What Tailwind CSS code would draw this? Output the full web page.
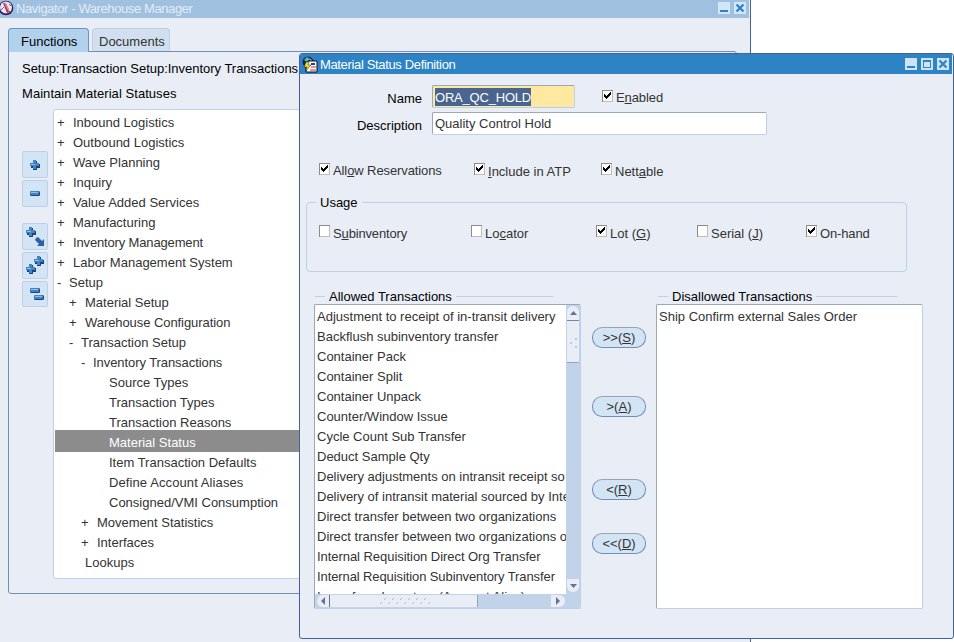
<!DOCTYPE html>
<html lang="en">
<head>
    <meta charset="UTF-8">
    <meta name="viewport" content="width=device-width, initial-scale=1.0">
    <title>Material Status Definition</title>
    <script src="https://cdn.jsdelivr.net/npm/@tailwindcss/browser@4"></script>
</head>
<body class="relative w-[954px] h-[642px] overflow-hidden bg-white font-['Liberation_Sans',sans-serif] text-[13px] leading-5 text-[#333] whitespace-nowrap">

<!-- shared icons -->
<svg class="hidden">
    <symbol id="plus" viewBox="0 0 10 10">
        <path d="M4 1h3v3h3v4H7v2H3V8H1V4h3z" fill="#1c4478"/>
        <path d="M3 0h3v3h3v3H6v3H3V6H0V3h3z" fill="#4584c4"/>
        <path d="M4 1h1v3H1v1h4V1z" fill="#8fc0ec"/>
    </symbol>
    <symbol id="dash" viewBox="0 0 10 5">
        <rect y="0" width="10" height="5" rx="1.5" fill="#1c4478"/>
        <rect width="9" height="4" rx="1.5" fill="#4584c4"/>
        <path d="M1 1h7v1H1z" fill="#8fc0ec"/>
    </symbol>
    <symbol id="win-min" viewBox="0 0 12 12"><path d="M2 8h8v2H2z" fill="#2d83c3"/></symbol>
    <symbol id="win-max" viewBox="0 0 12 12"><path d="M2 2h8v8H2zM3 4v5h6V4z" fill="#2d83c3" fill-rule="evenodd"/></symbol>
    <symbol id="win-close" viewBox="0 0 12 12"><path d="M2.5 2.500l7 7M9.500 2.500l-7 7" stroke="#2d83c3" stroke-width="2.2"/></symbol>
    <symbol id="box-off" viewBox="0 0 11 12"><path d="M0 0h11v12H0z" fill="#bdbdbd"/><path d="M0 0h11v1H1v11H0z" fill="#8b8b8b"/><path d="M1 1h9v10H1z" fill="#fff"/></symbol>
    <symbol id="box-on" viewBox="0 0 11 12"><path d="M0 0h11v12H0z" fill="#bdbdbd"/><path d="M0 0h11v1H1v11H0z" fill="#8b8b8b"/><path d="M1 1h9v10H1z" fill="#fff"/><path d="M2 4h1v1h1v1h1V5h1V4h1V3h1V2h1v3H8v1H7v1H6v1H5v1H4V8H3V7H2z" fill="#000"/></symbol>
</svg>

<!-- Navigator -->
<div class="absolute left-0 top-0 w-[751px] h-[642px] bg-[#e9eef6] border-r border-[#43619a]">
    <div class="flex items-start w-[749px] h-[18px] bg-[#9fc0df]">
        <svg class="w-[14px] h-[16px] shrink-0" viewBox="0 0 14 16"><circle cx="6" cy="8" r="7.3" fill="#24205a"/><circle cx="6" cy="7.5" r="6" fill="#e9e6f2"/><path d="M3 3h3l4 9-3 1z" fill="#c22878"/><path d="M5 3l4 8" stroke="#e8c83c"/><path d="M1 10l3-3M9 4l2 2" stroke="#6c60b8"/></svg>
        <span class="ml-[2px] -mt-px grow text-[#e4edf7] tracking-[-0.4px]">Navigator - Warehouse Manager</span>
        <div class="flex gap-1 mt-[2px] mr-[3px]">
            <svg class="size-3 bg-[#d3e6f6]"><use href="#win-min"/></svg>
            <svg class="size-3 bg-[#d3e6f6]"><use href="#win-close"/></svg>
        </div>
    </div>
    <div class="flex items-start pl-2 pt-[10px] h-[34px]">
        <div class="z-10 w-[81px] h-[24px] pl-3 pt-[3px] rounded-t-[4px] border border-b-0 border-[#6f92ba] bg-[#b2d1eb] text-black">Functions</div>
        <div class="ml-[3px] w-[78px] h-[23px] pl-[6px] pt-[3px] rounded-t-[4px] border border-b-0 border-[#bccfe7] bg-[#d2dfee]">Documents</div>
    </div>
    <div class="-mt-px ml-2 w-[729px] h-[543px] border border-[#6f8fb4] rounded-[3px] rounded-tl-none pl-[13px] pt-[7px]">
        <div class="text-black tracking-[-0.02px]">Setup:Transaction Setup:Inventory Transactions</div>
        <div class="mt-[5px] text-black tracking-[0.05px]">Maintain Material Statuses</div>
        <div class="flex mt-[5px]">
            <div class="flex flex-col w-[31px] pt-[42px]">
                <div class="w-[26px] h-[27px] flex items-center justify-center border border-[#bdd0e8] rounded-[2px] bg-[#d3e4f4]"><svg class="size-[10px]"><use href="#plus"/></svg></div>
                <div class="mt-[2px] h-[27px] w-[26px] flex items-center justify-center border border-[#bdd0e8] rounded-[2px] bg-[#d3e4f4]"><svg class="w-[10px] h-[5px]"><use href="#dash"/></svg></div>
                <div class="mt-4 h-[27px] w-[26px] border border-[#bdd0e8] rounded-[2px] bg-[#d3e4f4]"><svg class="w-6 h-[25px]" viewBox="0 0 24 25"><use href="#plus" x="3" y="3" width="10" height="10"/><path d="M13 14l2-1 4 4 2-2v7h-7l2-2-4-4z" fill="#2c62a4"/></svg></div>
                <div class="mt-[2px] h-[27px] w-[26px] border border-[#bdd0e8] rounded-[2px] bg-[#d3e4f4]"><svg class="w-6 h-[25px]" viewBox="0 0 24 25"><use href="#plus" x="11" y="3" width="10" height="10"/><use href="#plus" x="3" y="11" width="10" height="10"/></svg></div>
                <div class="mt-[2px] h-[26px] w-[26px] border border-[#bdd0e8] rounded-[2px] bg-[#d3e4f4]"><svg class="w-6 h-6" viewBox="0 0 24 24"><use href="#dash" x="7" y="6" width="10" height="5"/><use href="#dash" x="11" y="13" width="10" height="5"/></svg></div>
            </div>
            <div class="w-[650px] h-[470px] bg-white border border-[#bdd0e8] rounded-[3px] pt-[3px]">
                <div class="flex h-5 pl-[3px]"><span class="w-[16px]">+</span>Inbound Logistics</div>
                <div class="flex h-5 pl-[3px]"><span class="w-[16px]">+</span>Outbound Logistics</div>
                <div class="flex h-5 pl-[3px]"><span class="w-[16px]">+</span>Wave Planning</div>
                <div class="flex h-5 pl-[3px]"><span class="w-[16px]">+</span>Inquiry</div>
                <div class="flex h-5 pl-[3px]"><span class="w-[16px]">+</span>Value Added Services</div>
                <div class="flex h-5 pl-[3px]"><span class="w-[16px]">+</span>Manufacturing</div>
                <div class="flex h-5 pl-[3px] tracking-[-0.15px]"><span class="w-[16px]">+</span>Inventory Management</div>
                <div class="flex h-5 pl-[3px]"><span class="w-[16px]">+</span>Labor Management System</div>
                <div class="flex h-5 pl-[3px]"><span class="w-[12px]">-</span>Setup</div>
                <div class="flex h-5 pl-[15px]"><span class="w-[16px]">+</span>Material Setup</div>
                <div class="flex h-5 pl-[15px] tracking-[-0.07px]"><span class="w-[16px]">+</span>Warehouse Configuration</div>
                <div class="flex h-5 pl-[15px]"><span class="w-[12px]">-</span>Transaction Setup</div>
                <div class="flex h-5 pl-[27px] tracking-[-0.07px]"><span class="w-[12px]">-</span>Inventory Transactions</div>
                <div class="h-5 pl-[55px]">Source Types</div>
                <div class="h-5 pl-[55px]">Transaction Types</div>
                <div class="h-5 pl-[55px]">Transaction Reasons</div>
                <div class="h-[22px] -mt-[3px] mb-px pt-[3px] ml-px pl-[54px] bg-[#8c8c8c] text-white">Material Status</div>
                <div class="h-5 pl-[55px]">Item Transaction Defaults</div>
                <div class="h-5 pl-[55px] tracking-[0.1px]">Define Account Aliases</div>
                <div class="h-5 pl-[55px]">Consigned/VMI Consumption</div>
                <div class="flex h-5 pl-[27px]"><span class="w-[16px]">+</span>Movement Statistics</div>
                <div class="flex h-5 pl-[27px]"><span class="w-[16px]">+</span>Interfaces</div>
                <div class="h-5 pl-[31px]">Lookups</div>
            </div>
        </div>
    </div>
</div>

<!-- Material Status Definition -->
<div class="absolute left-[299px] top-[53px] w-[655px] h-[586px] bg-[#e9eef6] border border-[#43619a] rounded-[3px] overflow-hidden">
    <div class="flex items-start w-[652px] h-5 bg-[#2d83c3] text-white">
        <svg class="ml-[2px] mt-[2px] w-[16px] h-[17px] shrink-0" viewBox="0 0 16 17"><circle cx="6" cy="6" r="5.5" fill="#16205e"/><path d="M2 4l3-3 3 2-3 3z" fill="#4ec0a0"/><path d="M7 2l3 2-1 2z" fill="#9ab6ee"/><path d="M6 5h9v11H4v-4z" fill="#fff" stroke="#101018"/><path d="M9 7h4v2H9z" fill="#283c94"/><path d="M9 11h5M8 14h6" stroke="#c03030"/><path d="M4 6l3 0-1 3h3l-5 6 1-4H2z" fill="#f6e428" stroke="#222" stroke-width=".5"/></svg>
        <span class="ml-[2px] mt-px grow tracking-[-0.35px]">Material Status Definition</span>
        <div class="flex gap-1 mt-1 mr-[3px]">
            <svg class="size-3 bg-[#cde4f6]"><use href="#win-min"/></svg>
            <svg class="size-3 bg-[#cde4f6]"><use href="#win-max"/></svg>
            <svg class="size-3 bg-[#cde4f6]"><use href="#win-close"/></svg>
        </div>
    </div>

    <div class="flex pt-[11px]">
        <div class="w-[122px] text-right text-black pt-1">Name</div>
        <div class="ml-[10px] w-[143px] h-[23px] p-px pt-[2px] pl-[2px] border border-[#bdd0e8] border-t-[#9aa9ba] border-l-[#9aa9ba] rounded-[2px] bg-[#ffe9a0]"><span class="block w-[96px] h-[18px] leading-[19px] bg-[#48648f] text-white tracking-[-0.2px]">ORA_QC_HOLD</span></div>
        <svg class="ml-[27px] mt-[5px] w-[11px] h-[12px]"><use href="#box-on"/></svg>
        <span class="ml-[3px] pt-[3px] tracking-[-0.1px]">E<u>n</u>abled</span>
    </div>
    <div class="flex pt-[3px]">
        <div class="w-[122px] text-right text-black pt-1">Description</div>
        <div class="ml-[10px] w-[335px] h-[23px] pl-[2px] pt-px border border-[#bdd0e8] border-t-[#9aa9ba] border-l-[#9aa9ba] rounded-[2px] bg-white">Quality Control Hold</div>
    </div>

    <div class="flex mt-[27px] pl-[19px] h-5">
        <div class="flex w-[155px]"><svg class="w-[11px] h-[12px]"><use href="#box-on"/></svg><span class="ml-[3px] -mt-[2px] tracking-[-0.1px]">All<u>o</u>w Reservations</span></div>
        <div class="flex w-[127px]"><svg class="w-[11px] h-[12px]"><use href="#box-on"/></svg><span class="ml-[3px] -mt-px"><u>I</u>nclude in ATP</span></div>
        <div class="flex"><svg class="w-[11px] h-[12px]"><use href="#box-on"/></svg><span class="ml-[3px] -mt-px">Nett<u>a</u>ble</span></div>
    </div>

    <fieldset class="mt-[10px] ml-[6px] w-[601px] h-[79px] border border-[#bdd0e8] rounded-[4px] pl-3">
        <legend class="-ml-[3px] px-1 pt-px text-black leading-[18px]">Usage</legend>
        <div class="flex pt-[13px]">
            <div class="flex w-[152px]"><svg class="w-[11px] h-[12px]"><use href="#box-off"/></svg><span class="ml-[3px] -mt-px tracking-[-0.15px]">S<u>u</u>binventory</span></div>
            <div class="flex w-[125px]"><svg class="w-[11px] h-[12px]"><use href="#box-off"/></svg><span class="ml-[3px] -mt-px">Lo<u>c</u>ator</span></div>
            <div class="flex w-[101px]"><svg class="w-[11px] h-[12px]"><use href="#box-on"/></svg><span class="ml-[3px] -mt-px">Lot (<u>G</u>)</span></div>
            <div class="flex w-[109px]"><svg class="w-[11px] h-[12px]"><use href="#box-off"/></svg><span class="ml-[3px] -mt-px">Serial (<u>J</u>)</span></div>
            <div class="flex"><svg class="w-[11px] h-[12px]"><use href="#box-on"/></svg><span class="ml-[3px] -mt-px tracking-[-0.15px]">On-hand</span></div>
        </div>
    </fieldset>

    <div class="flex mt-[15px] ml-[14px]">
        <div class="w-[267px]">
            <div class="flex items-center w-[238px] h-[17px] pt-[2px] ml-px text-black"><i class="w-[10px] h-px bg-[#bdd0e8]"></i><span class="mx-1 pt-px">Allowed Transactions</span><i class="grow h-px bg-[#bdd0e8]"></i></div>
            <div class="h-[305px] border border-[#bdd0e8] border-t-[#9aa9ba] border-l-[#9aa9ba] rounded-[2px] bg-white overflow-hidden">
                <div class="flex h-[289px]">
                    <div class="w-[251px] pl-[2px] pt-[2px] overflow-hidden">
                        <div>Adjustment to receipt of in-transit delivery</div>
                        <div>Backflush subinventory transfer</div>
                        <div>Container Pack</div>
                        <div>Container Split</div>
                        <div>Container Unpack</div>
                        <div>Counter/Window Issue</div>
                        <div>Cycle Count Sub Transfer</div>
                        <div>Deduct Sample Qty</div>
                        <div>Delivery adjustments on intransit receipt so</div>
                        <div>Delivery of intransit material sourced by Inte</div>
                        <div>Direct transfer between two organizations</div>
                        <div>Direct transfer between two organizations o</div>
                        <div class="tracking-[-0.05px]">Internal Requisition Direct Org Transfer</div>
                        <div class="tracking-[-0.1px]">Internal Requisition Subinventory Transfer</div>
                        <div>Issue from Inventory (Account Alias)</div>
                    </div>
                    <div class="flex flex-col w-[14px] bg-[#c1d3e9]">
                        <svg class="w-[14px] h-[58px]" viewBox="0 0 14 58"><path d="M1 58V7a6 6 0 0 1 12 0v51z" fill="#e9eef6"/><path d="M4 10h7L7.500 6z" fill="#6b7090"/><path d="M1 15h12v1H1z" fill="#7a86a4"/><path d="M1 57h12v1H1z" fill="#8fa5c0"/><path d="M4 37h2v2H4zM9 33h2v2H9zM9 41h2v2H9z" fill="#b5cbe2"/></svg>
                        <svg class="mt-auto w-[14px] h-[16px]" viewBox="0 0 14 16"><path d="M1 1h12v7a6 6 0 0 1-12 0z" fill="#e9eef6"/><path d="M4 6h7L7.500 10z" fill="#6b7090"/></svg>
                    </div>
                </div>
                <div class="flex h-[14px] bg-[#c1d3e9]">
                    <svg class="w-[163px] h-[14px]" viewBox="0 0 163 14"><path d="M163 1H8a6 6 0 0 0 0 12h155z" fill="#e9eef6"/><path d="M10 3v8L6 7z" fill="#6b7090"/><path d="M14 1h1v12h-1z" fill="#6b7090"/><path d="M162 1h1v12h-1z" fill="#8fa5c0"/><path d="M65 10l2-2m6 2l2-2m6 2l2-2m6 2l2-2m6 2l2-2m6 2l2-2m6 2l2-2M69 6l2-2m6 2l2-2m6 2l2-2m6 2l2-2m6 2l2-2m6 2l2-2" stroke="#a4bcd6"/></svg>
                    <svg class="ml-[73px] w-[14px] h-[14px]" viewBox="0 0 14 14"><path d="M0 1h8a6 6 0 0 1 0 12H0z" fill="#e9eef6"/><path d="M5 3v8l4-4z" fill="#6b7090"/></svg>
                </div>
            </div>
        </div>

        <div class="flex flex-col w-[75px] pl-[11px] pt-[40px] text-center">
            <button class="w-[54px] h-[21px] leading-[19px] border border-[#6f8fb4] border-t-[#9aa4b0] rounded-[10px] bg-[#d3e4f4]">&gt;&gt;(<u>S</u>)</button>
            <button class="mt-[48px] w-[54px] h-[21px] leading-[19px] border border-[#6f8fb4] border-t-[#9aa4b0] rounded-[10px] bg-[#d3e4f4]">&gt;(<u>A</u>)</button>
            <button class="mt-[62px] w-[54px] h-[21px] leading-[19px] border border-[#6f8fb4] border-t-[#9aa4b0] rounded-[10px] bg-[#d3e4f4]">&lt;(<u>R</u>)</button>
            <button class="mt-[33px] w-[54px] h-[21px] leading-[19px] border border-[#6f8fb4] border-t-[#9aa4b0] rounded-[10px] bg-[#d3e4f4]">&lt;&lt;(<u>D</u>)</button>
        </div>

        <div class="w-[267px]">
            <div class="flex items-center w-[239px] h-[17px] pt-[2px] ml-[2px] text-black"><i class="w-[10px] h-px bg-[#bdd0e8]"></i><span class="mx-1 pt-px">Disallowed Transactions</span><i class="grow h-px bg-[#bdd0e8]"></i></div>
            <div class="h-[305px] pl-[2px] pt-[2px] border border-[#bdd0e8] border-t-[#9aa9ba] border-l-[#9aa9ba] rounded-[2px] bg-white">Ship Confirm external Sales Order</div>
        </div>
    </div>
</div>
</body>
</html>
